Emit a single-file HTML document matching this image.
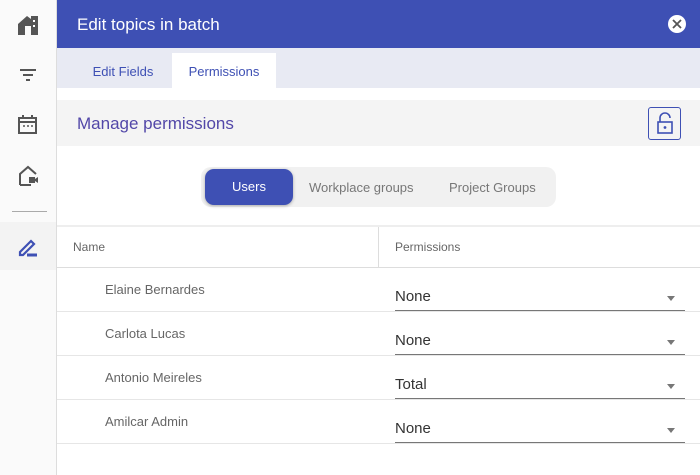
<!DOCTYPE html><html><head><style>
body{margin:0;width:700px;height:475px;position:relative;font-family:"Liberation Sans",sans-serif;background:#fff;overflow:hidden}
.sb{position:absolute;left:0;top:0;width:56px;height:475px;background:#fafafa;border-right:1px solid #ddd}
.ic{position:absolute;left:17px}
.hd{position:absolute;left:57px;top:0;right:0;height:48px;background:#3e50b4;color:#fff;font-size:17px}
.tabs{position:absolute;left:57px;top:48px;right:0;height:40px;background:#e8eaf3}
.tab{position:absolute;top:5px;height:35px;line-height:38px;font-size:13px;color:#3e50b4;text-align:center}
.mp{position:absolute;left:57px;top:100px;right:0;height:46px;background:#f4f4f4}
.seg{position:absolute;left:201px;top:167px;width:355px;height:40px;background:#f1f1f1;border-radius:10px}
.th{position:absolute;left:57px;top:225px;right:0;height:40px;border-top:2px solid #eee;border-bottom:1px solid #ddd;font-size:12px;color:#666}
.row{position:absolute;left:57px;right:0;height:43px;border-bottom:1px solid #e6e6e6}
.nm{position:absolute;left:48px;top:14px;font-size:13px;color:#666}
.sel{position:absolute;left:338px;top:20px;width:290px;height:22px;border-bottom:1px solid #777;font-size:15px;color:#333}
.sel:after{content:"";position:absolute;right:10px;top:8px;border:4px solid transparent;border-top:5px solid #777}
</style></head><body>
<div class="sb">
<svg class="ic" style="top:14px" width="22" height="22" viewBox="0 0 22 22"><path d="M1 10 L10 2 L14 5 L14 2 L21 2 L21 21 L14 21 L14 12 L8 12 L8 21 L1 21Z" fill="#555"/><rect x="16" y="6" width="2" height="2" fill="#fff"/><rect x="16" y="11" width="2" height="2" fill="#fff"/></svg>
<svg class="ic" style="top:66px" width="22" height="18"><path d="M3 4h16M6 9h10M9 14h4" stroke="#555" stroke-width="2"/></svg>
<svg class="ic" style="top:114px" width="22" height="22"><rect x="2" y="4" width="17" height="15" fill="none" stroke="#555" stroke-width="2"/><path d="M2 8h17M6 1v4M15 1v4" stroke="#555" stroke-width="2"/><path d="M6 12h2M10 12h2M14 12h2" stroke="#555" stroke-width="1.6"/></svg>
<svg class="ic" style="top:165px" width="22" height="22"><path d="M3 20V9l8-7 8 7" fill="none" stroke="#555" stroke-width="2"/><path d="M3 20h11" stroke="#555" stroke-width="2"/><rect x="12" y="12" width="6" height="6" fill="#555"/><path d="M18 14l3-2v6l-3-2z" fill="#555"/></svg>
<div style="position:absolute;left:12px;top:211px;width:35px;height:1px;background:#aaa"></div>
<div style="position:absolute;left:0;top:222px;width:56px;height:48px;background:#f3f3f3"></div>
<svg class="ic" style="top:237px" width="22" height="20"><path d="M3 15L14 4l3 3L6 18H3z" fill="none" stroke="#3e50b4" stroke-width="2.2"/><path d="M10 18h10" stroke="#3e50b4" stroke-width="3"/></svg>
</div>
<div class="hd"><span style="position:absolute;left:20px;top:15px">Edit topics in batch</span>
<div style="position:absolute;left:611px;top:15px;width:18px;height:18px;border-radius:50%;background:#fff"><svg width="18" height="18"><path d="M5 5l8 8M13 5l-8 8" stroke="#555" stroke-width="1.8"/></svg></div></div>
<div class="tabs"><div class="tab" style="left:28px;width:76px">Edit Fields</div><div class="tab" style="left:115px;width:104px;background:#fff">Permissions</div></div>
<div class="mp"><span style="position:absolute;left:20px;top:14px;font-size:17px;color:#5247a8">Manage permissions</span>
<div style="position:absolute;left:591px;top:7px;width:33px;height:33px;border:1px solid #3e50b4;border-radius:3px;box-sizing:border-box"><svg width="32" height="32"><path d="M11 14v-4a5 5 0 0 1 10 0" fill="none" stroke="#3e50b4" stroke-width="1.6"/><rect x="9" y="14" width="14" height="11" fill="none" stroke="#3e50b4" stroke-width="1.6"/><circle cx="16" cy="19.5" r="1.4" fill="#3e50b4"/></svg></div></div>
<div class="seg"><div style="position:absolute;left:4px;top:2px;width:88px;height:36px;background:#3e50b4;border-radius:9px;color:#fff;font-size:13px;text-align:center;line-height:36px;box-shadow:0 1px 3px rgba(0,0,0,.3)">Users</div>
<span style="position:absolute;left:108px;top:13px;font-size:13px;color:#777">Workplace groups</span><span style="position:absolute;left:248px;top:13px;font-size:13px;color:#777">Project Groups</span></div>
<div class="th"><span style="position:absolute;left:16px;top:13px">Name</span><div style="position:absolute;left:321px;top:0;width:1px;height:40px;background:#ddd"></div><span style="position:absolute;left:338px;top:13px">Permissions</span></div>
<div class="row" style="top:268px"><span class="nm">Elaine Bernardes</span><div class="sel">None</div></div>
<div class="row" style="top:312px"><span class="nm">Carlota Lucas</span><div class="sel">None</div></div>
<div class="row" style="top:356px"><span class="nm">Antonio Meireles</span><div class="sel">Total</div></div>
<div class="row" style="top:400px"><span class="nm">Amilcar Admin</span><div class="sel">None</div></div>
</body></html>
